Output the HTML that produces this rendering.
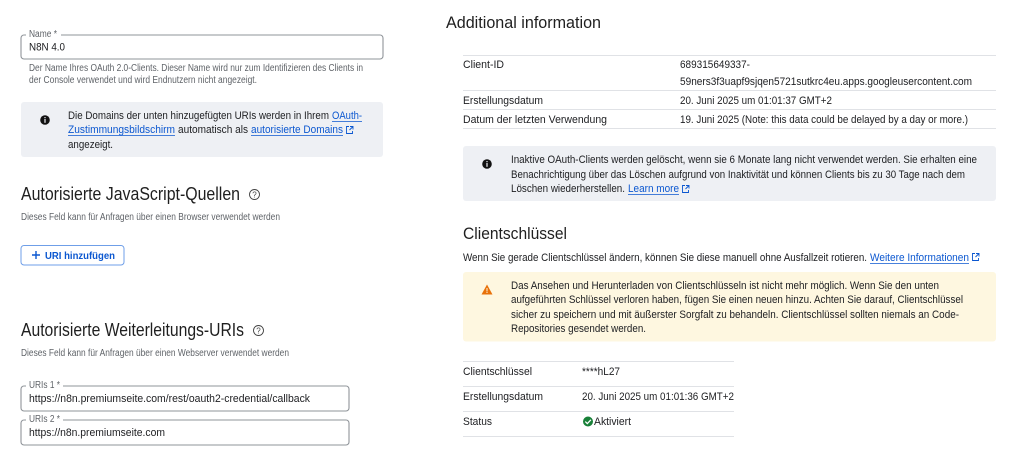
<!DOCTYPE html>
<html lang="de"><head><meta charset="utf-8"><title>OAuth-Client</title>
<style>
html,body{margin:0;padding:0;background:#fff;width:1024px;height:453px;overflow:hidden}
svg{display:block;filter:blur(.25px)}
text{font-family:"Liberation Sans",sans-serif;font-size:11px;fill:#202124;white-space:pre}
.s{font-size:10px;fill:#5f6368}
.l{font-size:10px;fill:#5f6368}
.h{font-size:18px;fill:#1f1f1f}
.b{fill:#0b57d0}
.f{fill:none;stroke:#8f9499;stroke-width:1.1}
.r{stroke:#e0e2e6;stroke-width:1}
.u{stroke:#0b57d0;stroke-width:.8}
.x{fill:none;stroke:#0b57d0;stroke-width:.9}
</style></head><body>
<svg width="1024" height="453" viewBox="0 0 1024 453" xmlns="http://www.w3.org/2000/svg">
<!-- Left column -->
<rect class="f" x="21" y="35" width="362" height="24" rx="3"/>
<rect x="26" y="31" width="35" height="8" fill="#fff"/>
<text class="l" x="29" y="37" textLength="28" lengthAdjust="spacingAndGlyphs">Name *</text>
<text x="29" y="50.500" textLength="36" lengthAdjust="spacingAndGlyphs">N8N 4.0</text>
<text class="s" x="29" y="71" textLength="334" lengthAdjust="spacingAndGlyphs">Der Name Ihres OAuth 2.0-Clients. Dieser Name wird nur zum Identifizieren des Clients in</text>
<text class="s" x="29" y="83" textLength="228" lengthAdjust="spacingAndGlyphs">der Console verwendet und wird Endnutzern nicht angezeigt.</text>

<rect x="21" y="102" width="362" height="55" rx="3" fill="#eef0f4"/>
<circle cx="45" cy="120" r="4.800" fill="#111"/><rect x="44.400" y="119" width="1.200" height="3.800" fill="#eef0f4"/><rect x="44.400" y="117" width="1.200" height="1.200" fill="#eef0f4"/>
<text x="68" y="119" textLength="261" lengthAdjust="spacingAndGlyphs">Die Domains der unten hinzugefügten URIs werden in Ihrem</text>
<text class="b" x="332" y="119" textLength="30" lengthAdjust="spacingAndGlyphs">OAuth-</text>
<line class="u" x1="332" y1="121.500" x2="362" y2="121.500"/>
<text class="b" x="68" y="133" textLength="107" lengthAdjust="spacingAndGlyphs">Zustimmungsbildschirm</text>
<line class="u" x1="68" y1="135.500" x2="175" y2="135.500"/>
<text x="178" y="133" textLength="70" lengthAdjust="spacingAndGlyphs">automatisch als</text>
<text class="b" x="251" y="133" textLength="92" lengthAdjust="spacingAndGlyphs">autorisierte Domains</text>
<line class="u" x1="251" y1="135.500" x2="343" y2="135.500"/>
<path class="x" d="M349 126.500H346.500V133.500H352.500V131M350 126.500H353V129.500M353 126.500L349.500 130"/>
<text x="68" y="148" textLength="45" lengthAdjust="spacingAndGlyphs">angezeigt.</text>

<text class="h" x="21" y="200" textLength="219" lengthAdjust="spacingAndGlyphs">Autorisierte JavaScript-Quellen</text>
<circle cx="254.500" cy="194.500" r="5" fill="none" stroke="#444" stroke-width=".9"/>
<text x="254.500" y="197.300" text-anchor="middle" style="font-size:8px;fill:#444">?</text>
<text class="s" x="21" y="220" textLength="259" lengthAdjust="spacingAndGlyphs">Dieses Feld kann für Anfragen über einen Browser verwendet werden</text>

<rect x="21" y="245.500" width="103" height="19.500" rx="3" fill="#fff" stroke="#6f9fe8" stroke-width="1"/>
<path d="M32 255H40M36 251V259" stroke="#0b57d0" stroke-width="1.400" fill="none"/>
<text class="b" x="45" y="259" textLength="70" lengthAdjust="spacingAndGlyphs" style="font-weight:700;font-size:10.500px">URI hinzufügen</text>

<text class="h" x="21" y="336" textLength="223" lengthAdjust="spacingAndGlyphs">Autorisierte Weiterleitungs-URIs</text>
<circle cx="258.500" cy="330.500" r="5" fill="none" stroke="#444" stroke-width=".9"/>
<text x="258.500" y="333.300" text-anchor="middle" style="font-size:8px;fill:#444">?</text>
<text class="s" x="21" y="356" textLength="268" lengthAdjust="spacingAndGlyphs">Dieses Feld kann für Anfragen über einen Webserver verwendet werden</text>

<rect class="f" x="21" y="386" width="328" height="25" rx="3"/>
<rect x="26" y="381" width="37" height="9" fill="#fff"/>
<text class="l" x="29" y="388" textLength="31" lengthAdjust="spacingAndGlyphs">URIs 1 *</text>
<text x="29" y="402" textLength="281" lengthAdjust="spacingAndGlyphs">https://n8n.premiumseite.com/rest/oauth2-credential/callback</text>
<rect class="f" x="21" y="420" width="328" height="25" rx="3"/>
<rect x="26" y="415" width="37" height="9" fill="#fff"/>
<text class="l" x="29" y="422" textLength="31" lengthAdjust="spacingAndGlyphs">URIs 2 *</text>
<text x="29" y="436" textLength="136" lengthAdjust="spacingAndGlyphs">https://n8n.premiumseite.com</text>

<!-- Right column -->
<text class="h" x="446" y="28" textLength="155" lengthAdjust="spacingAndGlyphs" style="font-size:17px">Additional information</text>
<line class="r" x1="463" y1="55.500" x2="996" y2="55.500"/>
<line class="r" x1="463" y1="90.500" x2="996" y2="90.500"/>
<line class="r" x1="463" y1="109.500" x2="996" y2="109.500"/>
<line class="r" x1="463" y1="128.500" x2="996" y2="128.500"/>
<text x="463" y="68" textLength="41" lengthAdjust="spacingAndGlyphs">Client-ID</text>
<text x="680" y="68" textLength="70" lengthAdjust="spacingAndGlyphs">689315649337-</text>
<text x="680" y="85" textLength="292" lengthAdjust="spacingAndGlyphs">59ners3f3uapf9sjqen5721sutkrc4eu.apps.googleusercontent.com</text>
<text x="463" y="104" textLength="80" lengthAdjust="spacingAndGlyphs">Erstellungsdatum</text>
<text x="680" y="104" textLength="152" lengthAdjust="spacingAndGlyphs">20. Juni 2025 um 01:01:37 GMT+2</text>
<text x="463" y="123" textLength="144" lengthAdjust="spacingAndGlyphs">Datum der letzten Verwendung</text>
<text x="680" y="123" textLength="288" lengthAdjust="spacingAndGlyphs">19. Juni 2025 (Note: this data could be delayed by a day or more.)</text>

<rect x="463" y="146" width="533" height="55" rx="3" fill="#eef0f4"/>
<circle cx="487" cy="164" r="4.800" fill="#111"/><rect x="486.400" y="163" width="1.200" height="3.800" fill="#eef0f4"/><rect x="486.400" y="161" width="1.200" height="1.200" fill="#eef0f4"/>
<text x="511" y="163" textLength="466" lengthAdjust="spacingAndGlyphs">Inaktive OAuth-Clients werden gelöscht, wenn sie 6 Monate lang nicht verwendet werden. Sie erhalten eine</text>
<text x="511" y="178" textLength="454" lengthAdjust="spacingAndGlyphs">Benachrichtigung über das Löschen aufgrund von Inaktivität und können Clients bis zu 30 Tage nach dem</text>
<text x="511" y="192" textLength="114" lengthAdjust="spacingAndGlyphs">Löschen wiederherstellen.</text>
<text class="b" x="628" y="192" textLength="51" lengthAdjust="spacingAndGlyphs">Learn more</text>
<line class="u" x1="628" y1="194.500" x2="679" y2="194.500"/>
<path class="x" d="M685 185.500H682.500V192.500H688.500V190M686 185.500H689V188.500M689 185.500L685.500 189"/>

<text class="h" x="463" y="239" textLength="104" lengthAdjust="spacingAndGlyphs" style="font-size:17px">Clientschlüssel</text>
<text x="463" y="261" textLength="404" lengthAdjust="spacingAndGlyphs">Wenn Sie gerade Clientschlüssel ändern, können Sie diese manuell ohne Ausfallzeit rotieren.</text>
<text class="b" x="870" y="261" textLength="99" lengthAdjust="spacingAndGlyphs">Weitere Informationen</text>
<line class="u" x1="870" y1="263.500" x2="969" y2="263.500"/>
<path class="x" d="M975 253.500H972.500V260.500H978.500V258M976 253.500H979V256.500M979 253.500L975.500 257"/>

<rect x="463" y="272" width="533" height="69.500" rx="3" fill="#fef7e0"/>
<path d="M487 284.500L492.500 294.500H481.500Z" fill="#e8710a"/><rect x="486.500" y="288" width="1" height="3.500" fill="#fef7e0"/><rect x="486.500" y="292" width="1" height="1" fill="#fef7e0"/>
<text x="511" y="289" textLength="428" lengthAdjust="spacingAndGlyphs">Das Ansehen und Herunterladen von Clientschlüsseln ist nicht mehr möglich. Wenn Sie den unten</text>
<text x="511" y="303" textLength="452" lengthAdjust="spacingAndGlyphs">aufgeführten Schlüssel verloren haben, fügen Sie einen neuen hinzu. Achten Sie darauf, Clientschlüssel</text>
<text x="511" y="318" textLength="448" lengthAdjust="spacingAndGlyphs">sicher zu speichern und mit äußerster Sorgfalt zu behandeln. Clientschlüssel sollten niemals an Code-</text>
<text x="511" y="332" textLength="135" lengthAdjust="spacingAndGlyphs">Repositories gesendet werden.</text>

<line class="r" x1="463" y1="361.500" x2="734" y2="361.500"/>
<line class="r" x1="463" y1="386.500" x2="734" y2="386.500"/>
<line class="r" x1="463" y1="411.500" x2="734" y2="411.500"/>
<line class="r" x1="463" y1="436.500" x2="734" y2="436.500"/>
<text x="463" y="375" textLength="69" lengthAdjust="spacingAndGlyphs">Clientschlüssel</text>
<text x="582" y="375" textLength="38" lengthAdjust="spacingAndGlyphs">****hL27</text>
<text x="463" y="400" textLength="80" lengthAdjust="spacingAndGlyphs">Erstellungsdatum</text>
<text x="582" y="400" textLength="152" lengthAdjust="spacingAndGlyphs">20. Juni 2025 um 01:01:36 GMT+2</text>
<text x="463" y="425" textLength="29" lengthAdjust="spacingAndGlyphs">Status</text>
<circle cx="588" cy="421.500" r="5" fill="#188038"/>
<path d="M585.300 421.600L587.300 423.600L590.900 419.800" fill="none" stroke="#fff" stroke-width="1.200"/>
<text x="594" y="425" textLength="37" lengthAdjust="spacingAndGlyphs">Aktiviert</text>
</svg>
</body></html>
